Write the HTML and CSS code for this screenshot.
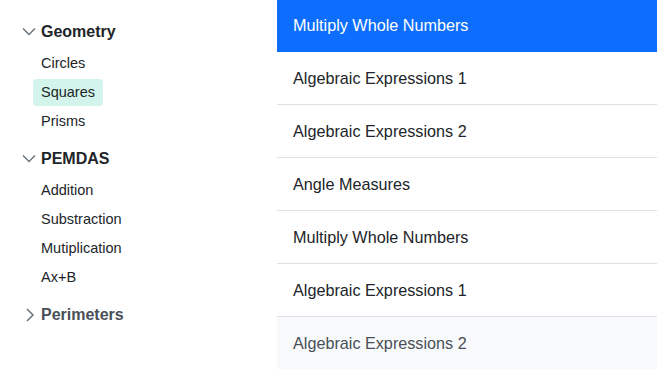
FILE: index.html
```html
<!DOCTYPE html>
<html>
<head>
<meta charset="utf-8">
<link rel="stylesheet" href="styles.css">
</head>
<body>
<div class="page">
  <nav class="sidebar">
    <div class="group">
      <div class="group-head">
        <svg class="chev" viewBox="0 0 14 14"><path d="M1 3.5 L7 9.5 L13 3.5"/></svg>
        <span>Geometry</span>
      </div>
      <ul class="items">
        <li class="item">Circles</li>
        <li class="item selected">Squares</li>
        <li class="item">Prisms</li>
      </ul>
    </div>
    <div class="group">
      <div class="group-head">
        <svg class="chev" viewBox="0 0 14 14"><path d="M1 3.5 L7 9.5 L13 3.5"/></svg>
        <span>PEMDAS</span>
      </div>
      <ul class="items">
        <li class="item">Addition</li>
        <li class="item">Substraction</li>
        <li class="item">Mutiplication</li>
        <li class="item">Ax+B</li>
      </ul>
    </div>
    <div class="group collapsed">
      <div class="group-head">
        <svg class="chev" viewBox="0 0 14 14"><path d="M5 1 L11 7 L5 13"/></svg>
        <span>Perimeters</span>
      </div>
    </div>
  </nav>
  <ul class="list">
    <li class="row active">Multiply Whole Numbers</li>
    <li class="row">Algebraic Expressions 1</li>
    <li class="row">Algebraic Expressions 2</li>
    <li class="row">Angle Measures</li>
    <li class="row">Multiply Whole Numbers</li>
    <li class="row">Algebraic Expressions 1</li>
    <li class="row hover">Algebraic Expressions 2</li>
  </ul>
</div>
</body>
</html>
```
FILE: styles.css
```css
* { box-sizing: border-box; }
html, body {
  margin: 0;
  padding: 0;
  background: #fff;
  font-family: "Liberation Sans", Arial, sans-serif;
  color: #212529;
  overflow: hidden;
}
.page {
  display: flex;
  width: 657px;
  height: 369px;
}
.sidebar {
  width: 277px;
  flex: none;
  padding: 20px 0 0 22px;
}
.group {
  margin-bottom: 12px;
}
.group-head {
  display: flex;
  align-items: center;
  gap: 5px;
  height: 24px;
  font-size: 16px;
  font-weight: bold;
  color: #212529;
}
.collapsed .group-head {
  color: #495057;
}
.chev {
  width: 14px;
  height: 14px;
  flex: none;
}
.chev path {
  fill: none;
  stroke: #6c757d;
  stroke-width: 1.5;
}
.items {
  list-style: none;
  margin: 6px 0 0 11px;
  padding: 0;
  display: flex;
  flex-direction: column;
  align-items: flex-start;
  gap: 2px;
}
.item {
  height: 27px;
  line-height: 27px;
  padding: 0 8px;
  font-size: 14.5px;
  border-radius: 4px;
}
.item.selected {
  background: #d2f4ea;
}
.list {
  flex: 1;
  list-style: none;
  margin: 0;
  padding: 0;
}
.row {
  height: 53px;
  line-height: 52px;
  padding: 0 16px;
  font-size: 16.2px;
  border-bottom: 1px solid #dee2e6;
  color: #212529;
}
.row.active {
  height: 52px;
  line-height: 51px;
  background: #0d6efd;
  border-bottom-color: #0d6efd;
  color: #fff;
}
.row.hover {
  background: #f8f9fa;
  color: #495057;
}
```
